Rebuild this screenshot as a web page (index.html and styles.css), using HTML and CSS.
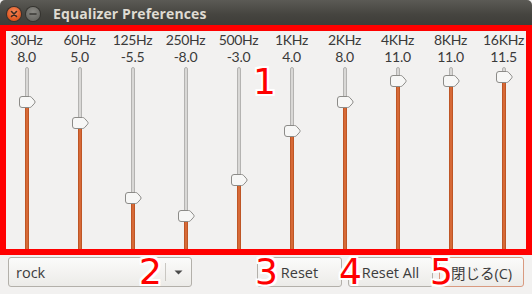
FILE: index.html
```html
<!DOCTYPE html>
<html lang="ja">
<head>
    <meta charset="UTF-8">
    <title>Equalizer Preferences</title>
    <link rel="stylesheet" href="styles.css">
</head>
<body>
    <div class="window">
        <div class="titlebar">
            <span class="wbtn close">
                <svg width="14" height="14" viewBox="0 0 14 14"><path d="M4.5 4.5l5 5M9.5 4.5l-5 5" stroke="#3a2a22" stroke-width="1.6" stroke-linecap="round"/></svg>
            </span>
            <span class="wbtn minimize">
                <svg width="14" height="14" viewBox="0 0 14 14"><path d="M4 7h6" stroke="#3a3935" stroke-width="1.6" stroke-linecap="round"/></svg>
            </span>
            <span class="title">Equalizer Preferences</span>
        </div>

        <!-- bandas del ecualizador -->
        <div class="bands">
            <div class="band">
                <div class="freq">30Hz</div>
                <div class="gain">8.0</div>
                <div class="slider" style="--y: 35px">
                    <div class="trough"></div><div class="fill"></div>
                    <svg class="thumb" viewBox="0 0 17 12"><path d="M3 .5h7.5c1 0 1.5.3 2.2 1l3 3.4c.5.6.5 1.6 0 2.2l-3 3.4c-.7.7-1.2 1-2.2 1H3A2.5 2.5 0 0 1 .5 9V3A2.5 2.5 0 0 1 3 .5z"/></svg>
                </div>
            </div>
            <div class="band">
                <div class="freq">60Hz</div>
                <div class="gain">5.0</div>
                <div class="slider" style="--y: 56px">
                    <div class="trough"></div><div class="fill"></div>
                    <svg class="thumb" viewBox="0 0 17 12"><path d="M3 .5h7.5c1 0 1.5.3 2.2 1l3 3.4c.5.6.5 1.6 0 2.2l-3 3.4c-.7.7-1.2 1-2.2 1H3A2.5 2.5 0 0 1 .5 9V3A2.5 2.5 0 0 1 3 .5z"/></svg>
                </div>
            </div>
            <div class="band">
                <div class="freq">125Hz</div>
                <div class="gain">-5.5</div>
                <div class="slider" style="--y: 131px">
                    <div class="trough"></div><div class="fill"></div>
                    <svg class="thumb" viewBox="0 0 17 12"><path d="M3 .5h7.5c1 0 1.5.3 2.2 1l3 3.4c.5.6.5 1.6 0 2.2l-3 3.4c-.7.7-1.2 1-2.2 1H3A2.5 2.5 0 0 1 .5 9V3A2.5 2.5 0 0 1 3 .5z"/></svg>
                </div>
            </div>
            <div class="band">
                <div class="freq">250Hz</div>
                <div class="gain">-8.0</div>
                <div class="slider" style="--y: 149px">
                    <div class="trough"></div><div class="fill"></div>
                    <svg class="thumb" viewBox="0 0 17 12"><path d="M3 .5h7.5c1 0 1.5.3 2.2 1l3 3.4c.5.6.5 1.6 0 2.2l-3 3.4c-.7.7-1.2 1-2.2 1H3A2.5 2.5 0 0 1 .5 9V3A2.5 2.5 0 0 1 3 .5z"/></svg>
                </div>
            </div>
            <div class="band">
                <div class="freq">500Hz</div>
                <div class="gain">-3.0</div>
                <div class="slider" style="--y: 113px">
                    <div class="trough"></div><div class="fill"></div>
                    <svg class="thumb" viewBox="0 0 17 12"><path d="M3 .5h7.5c1 0 1.5.3 2.2 1l3 3.4c.5.6.5 1.6 0 2.2l-3 3.4c-.7.7-1.2 1-2.2 1H3A2.5 2.5 0 0 1 .5 9V3A2.5 2.5 0 0 1 3 .5z"/></svg>
                </div>
            </div>
            <div class="band">
                <div class="freq">1KHz</div>
                <div class="gain">4.0</div>
                <div class="slider" style="--y: 64px">
                    <div class="trough"></div><div class="fill"></div>
                    <svg class="thumb" viewBox="0 0 17 12"><path d="M3 .5h7.5c1 0 1.5.3 2.2 1l3 3.4c.5.6.5 1.6 0 2.2l-3 3.4c-.7.7-1.2 1-2.2 1H3A2.5 2.5 0 0 1 .5 9V3A2.5 2.5 0 0 1 3 .5z"/></svg>
                </div>
            </div>
            <div class="band">
                <div class="freq">2KHz</div>
                <div class="gain">8.0</div>
                <div class="slider" style="--y: 35px">
                    <div class="trough"></div><div class="fill"></div>
                    <svg class="thumb" viewBox="0 0 17 12"><path d="M3 .5h7.5c1 0 1.5.3 2.2 1l3 3.4c.5.6.5 1.6 0 2.2l-3 3.4c-.7.7-1.2 1-2.2 1H3A2.5 2.5 0 0 1 .5 9V3A2.5 2.5 0 0 1 3 .5z"/></svg>
                </div>
            </div>
            <div class="band">
                <div class="freq">4KHz</div>
                <div class="gain">11.0</div>
                <div class="slider" style="--y: 14px">
                    <div class="trough"></div><div class="fill"></div>
                    <svg class="thumb" viewBox="0 0 17 12"><path d="M3 .5h7.5c1 0 1.5.3 2.2 1l3 3.4c.5.6.5 1.6 0 2.2l-3 3.4c-.7.7-1.2 1-2.2 1H3A2.5 2.5 0 0 1 .5 9V3A2.5 2.5 0 0 1 3 .5z"/></svg>
                </div>
            </div>
            <div class="band">
                <div class="freq">8KHz</div>
                <div class="gain">11.0</div>
                <div class="slider" style="--y: 14px">
                    <div class="trough"></div><div class="fill"></div>
                    <svg class="thumb" viewBox="0 0 17 12"><path d="M3 .5h7.5c1 0 1.5.3 2.2 1l3 3.4c.5.6.5 1.6 0 2.2l-3 3.4c-.7.7-1.2 1-2.2 1H3A2.5 2.5 0 0 1 .5 9V3A2.5 2.5 0 0 1 3 .5z"/></svg>
                </div>
            </div>
            <div class="band">
                <div class="freq">16KHz</div>
                <div class="gain">11.5</div>
                <div class="slider" style="--y: 10px">
                    <div class="trough"></div><div class="fill"></div>
                    <svg class="thumb" viewBox="0 0 17 12"><path d="M3 .5h7.5c1 0 1.5.3 2.2 1l3 3.4c.5.6.5 1.6 0 2.2l-3 3.4c-.7.7-1.2 1-2.2 1H3A2.5 2.5 0 0 1 .5 9V3A2.5 2.5 0 0 1 3 .5z"/></svg>
                </div>
            </div>
        </div>

        <div class="controls">
            <div class="combo">
                <span class="combo-text">rock</span>
                <span class="combo-btn">
                    <svg width="9" height="5" viewBox="0 0 9 5"><path d="M0.5 0.5h8l-4 4z" fill="#4a4a4a"/></svg>
                </span>
            </div>
            <div class="buttons">
                <button class="btn">Reset</button>
                <button class="btn">Reset All</button>
                <button class="btn default">閉じる(C)</button>
            </div>
        </div>

        <!-- anotaciones -->
        <div class="mark-box"></div>
        <span class="mark m1">1</span>
        <span class="mark m2">2</span>
        <span class="mark m3">3</span>
        <span class="mark m4">4</span>
        <span class="mark m5">5</span>
    </div>
</body>
</html>
```

FILE: styles.css
```css
body {
    margin: 0;
    padding: 0;
    background-color: #f2f1f0;
    font-family: "Open Sans", "Noto Sans CJK JP", sans-serif;
    font-size: 14px;
    color: #3c3c3c;
}
.window {
    position: relative;
    width: 532px;
    height: 294px;
    overflow: hidden;
    background-color: #f2f1f0;
}
.titlebar {
    height: 25px;
    display: flex;
    align-items: center;
    padding-left: 7px;
    background: linear-gradient(#5b5a55, #45443f 60%, #3e3d39);
    border-radius: 5px 5px 0 0;
}
.wbtn {
    width: 14px;
    height: 14px;
    border-radius: 50%;
    display: flex;
    margin-top: 3px;
    box-sizing: border-box;
}
.close {
    background: radial-gradient(circle at 50% 35%, #f58a5c, #e0561f 70%, #c84616);
    box-shadow: 0 0 0 1px #3a2f2a;
}
.minimize {
    margin-left: 5px;
    background: radial-gradient(circle at 50% 35%, #8a8984, #6b6a65 70%, #5d5c57);
    box-shadow: 0 0 0 1px #34332f;
}
.title {
    margin-left: 13px;
    margin-top: 1px;
    font-weight: bold;
    font-size: 14px;
    letter-spacing: 0.1px;
    color: #dfdbd2;
}
.bands {
    height: 230px;
    display: flex;
    padding-top: 6px;
    box-sizing: border-box;
    overflow: hidden;
}
.band {
    width: 53px;
    display: flex;
    flex-direction: column;
    align-items: center;
}
.freq, .gain {
    font-family: Lato, "Open Sans", sans-serif;
    font-size: 14px;
    line-height: 17px;
    letter-spacing: -0.3px;
    color: #3a3a3a;
    white-space: nowrap;
}
.slider {
    position: relative;
    width: 18px;
    height: 184px;
    margin-top: 2px;
}
.trough {
    position: absolute;
    left: 7px;
    top: 0;
    bottom: 0;
    width: 4px;
    box-sizing: border-box;
    background-color: #d9d8d6;
    border: 1px solid #b4b3b1;
    border-radius: 2px;
}
.fill {
    position: absolute;
    left: 7px;
    width: 4px;
    top: var(--y);
    bottom: 0;
    background: linear-gradient(to right, #b24c1d, #e3733f 50%, #b24c1d);
}
.thumb {
    position: absolute;
    left: 1px;
    top: calc(var(--y) - 6px);
    width: 17px;
    height: 12px;
    fill: #f7f7f6;
    stroke: #8c8b88;
    stroke-width: 1;
}
.controls {
    display: flex;
    align-items: flex-start;
    padding: 2px 8px 0 8px;
}
.combo {
    width: 184px;
    height: 30px;
    box-sizing: border-box;
    display: flex;
    align-items: center;
    border: 1px solid #b3b0aa;
    border-radius: 3px;
    background: linear-gradient(#fbfbfa, #ecebe8);
}
.combo-text {
    flex: 1;
    padding-left: 7px;
    font-size: 14.5px;
}
.combo-btn {
    width: 25px;
    height: 18px;
    display: flex;
    align-items: center;
    justify-content: center;
    border-left: 1px solid #c9c7c2;
}
.buttons {
    margin-left: auto;
    display: flex;
    gap: 6px;
}
.btn {
    width: 85px;
    height: 30px;
    padding: 0;
    font-family: inherit;
    font-size: 14.5px;
    color: #3c3c3c;
    border: 1px solid #b3b0aa;
    border-radius: 3px;
    background: linear-gradient(#fbfbfa, #ecebe8);
}
.btn.default {
    border-color: #d99a80;
}
.mark-box {
    position: absolute;
    left: 0;
    top: 25px;
    width: 532px;
    height: 230px;
    box-sizing: border-box;
    border: 6px solid #ff0000;
}
.mark {
    position: absolute;
    font-family: "DejaVu Sans", sans-serif;
    font-size: 36px;
    line-height: 36px;
    color: #ff0000;
    text-shadow: 2px 0 #fff, -2px 0 #fff, 0 2px #fff, 0 -2px #fff,
        2px 2px #fff, -2px -2px #fff, 2px -2px #fff, -2px 2px #fff;
}
.m1 { left: 253px; top: 64px; }
.m2 { left: 139px; top: 254px; }
.m3 { left: 255px; top: 254px; }
.m4 { left: 339px; top: 254px; }
.m5 { left: 430px; top: 254px; }
```
